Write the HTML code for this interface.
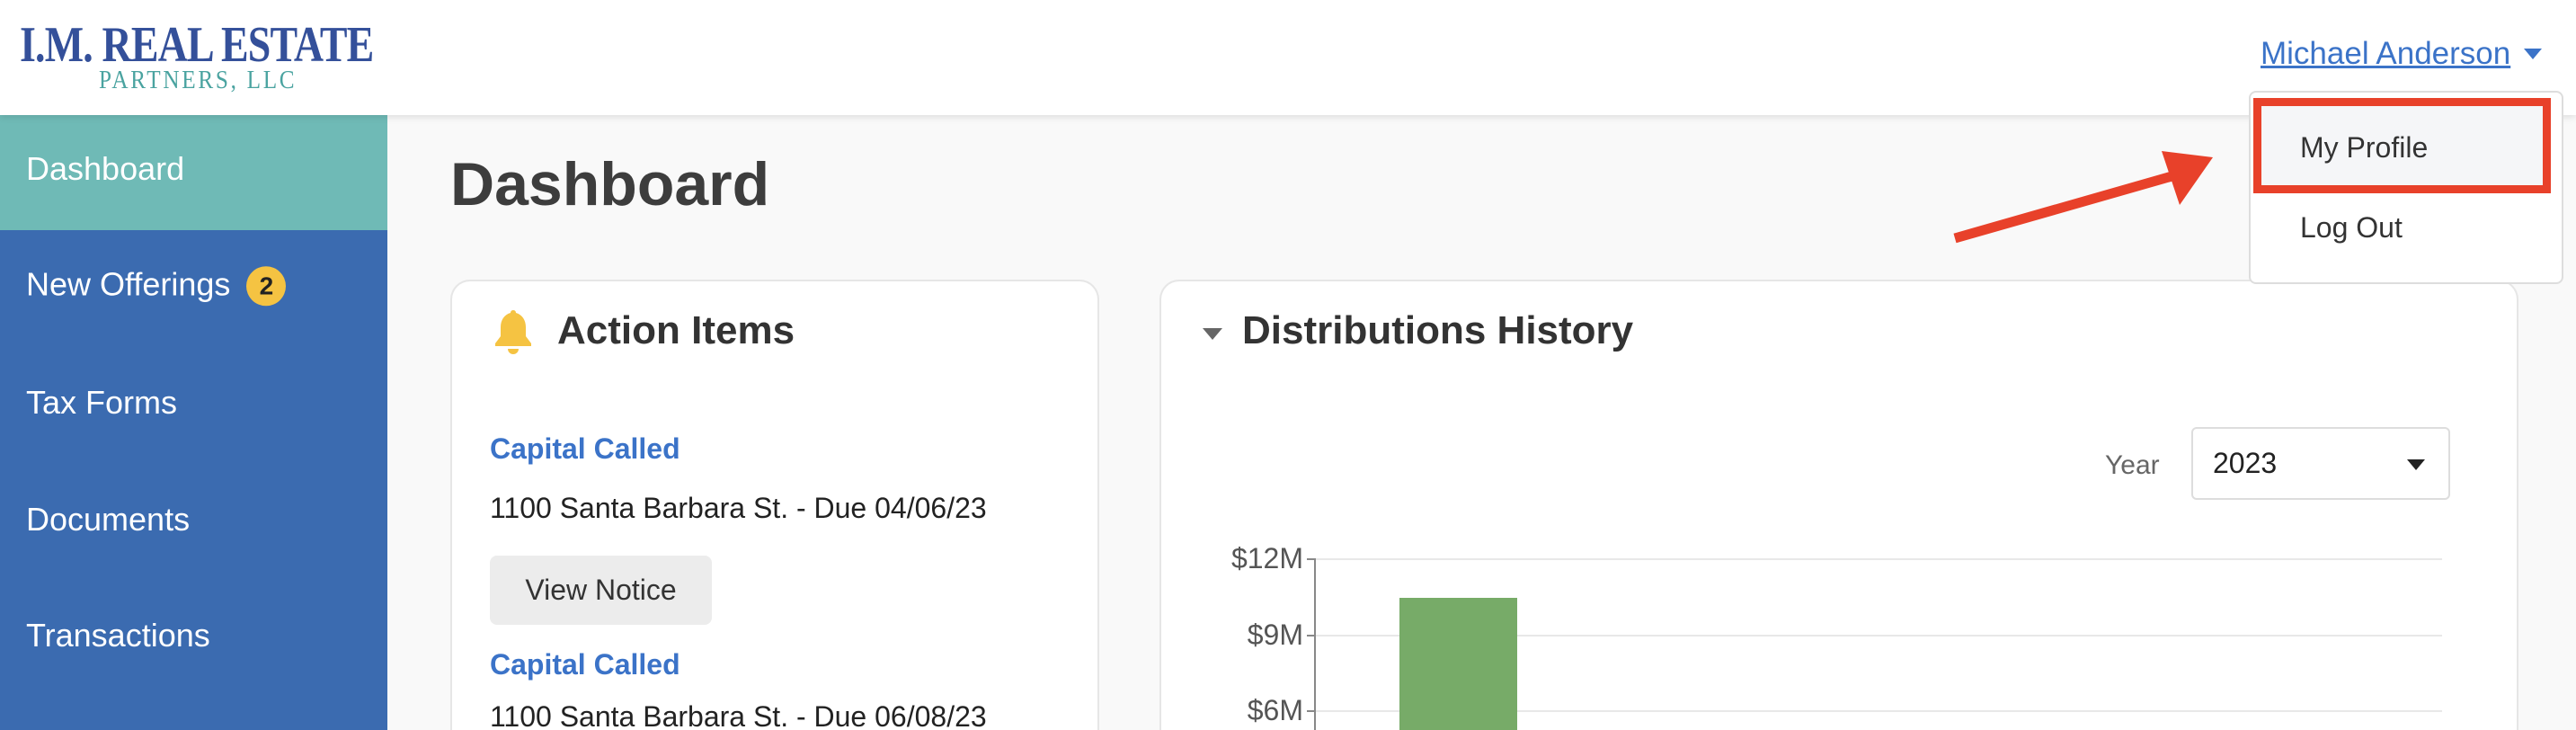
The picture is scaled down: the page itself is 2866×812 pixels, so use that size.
<!DOCTYPE html>
<html><head><meta charset="utf-8"><style>
*{margin:0;padding:0;box-sizing:border-box}
html{width:2866px;height:812px;overflow:hidden}
body{width:2866px;height:812px;overflow:hidden;background:#f9f9f9;font-family:"Liberation Sans",sans-serif;position:relative}
.abs{position:absolute}
.hdr{left:0;top:0;width:2866px;height:128px;background:#fff;box-shadow:0 2px 8px rgba(0,0,0,.12);z-index:2}
.side{left:0;top:128px;width:431px;height:684px;background:#3b6bb0}
.nav{position:absolute;left:29px;color:#fff;font-size:36px;transform:translateY(-50%);white-space:nowrap}
.card{background:#fff;border:2px solid #e6e6e6;border-bottom:none;border-radius:22px 22px 0 0}
</style></head><body>
<div class="abs hdr">
  <div class="abs" style="left:22px;top:18px;font-family:'Liberation Serif',serif;font-size:56px;font-weight:bold;color:#34509a;letter-spacing:-1px;transform:scaleX(.82);transform-origin:left;white-space:nowrap">I.M. REAL ESTATE</div>
  <div class="abs" style="left:110px;top:74px;font-family:'Liberation Serif',serif;font-size:28px;color:#4aa3a0;letter-spacing:3px;transform:scaleX(.9);transform-origin:left;white-space:nowrap">PARTNERS, LLC</div>
  <div class="abs" style="left:2515px;top:40px;font-size:35px;color:#3b73c8;text-decoration:underline;white-space:nowrap">Michael Anderson</div>
  <div class="abs" style="left:2808px;top:54px;width:0;height:0;border-left:10px solid transparent;border-right:10px solid transparent;border-top:12px solid #3b73c8"></div>
</div>
<div class="abs side">
  <div class="abs" style="left:0;top:0;width:431px;height:128px;background:#6fbab6"></div>
  <div class="nav" style="top:60px">Dashboard</div>
  <div class="nav" style="top:190px">New Offerings <span style="display:inline-block;width:44px;height:44px;border-radius:50%;background:#f5c342;color:#222;font-size:28px;font-weight:bold;text-align:center;line-height:44px;vertical-align:middle;margin-left:8px">2</span></div>
  <div class="nav" style="top:320px">Tax Forms</div>
  <div class="nav" style="top:450px">Documents</div>
  <div class="nav" style="top:579px">Transactions</div>
</div>
<div class="abs" style="left:501px;top:166px;font-size:68px;font-weight:bold;color:#3d3d3d">Dashboard</div>
<div class="abs card" style="left:501px;top:311px;width:722px;height:501px;overflow:hidden">
  <svg class="abs" style="left:44px;top:30px" width="48" height="52" viewBox="0 0 48 52"><path d="M24 2c2 0 3 1.5 3 3 7 2 11 8 11 16v10l6 8v3H4v-3l6-8V21c0-8 4-14 11-16 0-1.5 1-3 3-3z" fill="#f5c342"/><path d="M18 45a6 6 0 0 0 12 0z" fill="#f5c342"/></svg>
  <div class="abs" style="left:117px;top:30px;font-size:44px;font-weight:bold;color:#333">Action Items</div>
  <div class="abs" style="left:42px;top:168px;font-size:32px;font-weight:bold;color:#3b73c8">Capital Called</div>
  <div class="abs" style="left:42px;top:234px;font-size:32px;color:#222">1100 Santa Barbara St. - Due 04/06/23</div>
  <div class="abs" style="left:42px;top:305px;width:247px;height:77px;background:#ececec;border-radius:8px;font-size:32px;color:#333;text-align:center;line-height:77px">View Notice</div>
  <div class="abs" style="left:42px;top:408px;font-size:32px;font-weight:bold;color:#3b73c8">Capital Called</div>
  <div class="abs" style="left:42px;top:466px;font-size:32px;color:#222">1100 Santa Barbara St. - Due 06/08/23</div>
</div>
<div class="abs card" style="left:1290px;top:311px;width:1512px;height:501px;overflow:hidden">
  <div class="abs" style="left:46px;top:52px;width:0;height:0;border-left:11px solid transparent;border-right:11px solid transparent;border-top:13px solid #666"></div>
  <div class="abs" style="left:90px;top:30px;font-size:44px;font-weight:bold;color:#333">Distributions History</div>
  <div class="abs" style="left:1050px;top:188px;font-size:30px;color:#666">Year</div>
  <div class="abs" style="left:1146px;top:162px;width:288px;height:81px;border:2px solid #ddd;border-radius:6px;background:#fff">
    <div class="abs" style="left:22px;top:20px;font-size:32px;color:#222">2023</div>
    <div class="abs" style="left:238px;top:34px;width:0;height:0;border-left:10px solid transparent;border-right:10px solid transparent;border-top:12px solid #222"></div>
  </div>
  <div class="abs" style="left:170px;top:308px;width:2px;height:200px;background:#888"></div>
  <div class="abs" style="left:172px;top:308px;width:1253px;height:2px;background:#e8e8e8"></div>
  <div class="abs" style="left:172px;top:393px;width:1253px;height:2px;background:#e8e8e8"></div>
  <div class="abs" style="left:172px;top:477px;width:1253px;height:2px;background:#e8e8e8"></div>
  <div class="abs" style="left:162px;top:308px;width:8px;height:2px;background:#888"></div>
  <div class="abs" style="left:162px;top:393px;width:8px;height:2px;background:#888"></div>
  <div class="abs" style="left:162px;top:477px;width:8px;height:2px;background:#888"></div>
  <div class="abs" style="left:40px;top:290px;width:118px;text-align:right;font-size:32px;color:#555">$12M</div>
  <div class="abs" style="left:40px;top:375px;width:118px;text-align:right;font-size:32px;color:#555">$9M</div>
  <div class="abs" style="left:40px;top:459px;width:118px;text-align:right;font-size:32px;color:#555">$6M</div>
  <div class="abs" style="left:265px;top:352px;width:131px;height:149px;background:#77ab68"></div>
</div>
<svg class="abs" style="left:0;top:0;z-index:3" width="2866" height="812"><line x1="2175" y1="265" x2="2420" y2="195" stroke="#e8412a" stroke-width="11"/><polygon points="2462,175 2405,168 2425,228" fill="#e8412a"/></svg>
<div class="abs" style="left:2502px;top:101px;width:350px;height:215px;background:#fff;border:2px solid #ddd;border-radius:8px;z-index:3">
  <div class="abs" style="left:3px;top:6px;width:331px;height:106px;background:#f5f6f8;border:9px solid #e8412a"></div>
  <div class="abs" style="left:55px;top:43px;font-size:32px;color:#333">My Profile</div>
  <div class="abs" style="left:55px;top:132px;font-size:32px;color:#333">Log Out</div>
</div>
</body></html>
